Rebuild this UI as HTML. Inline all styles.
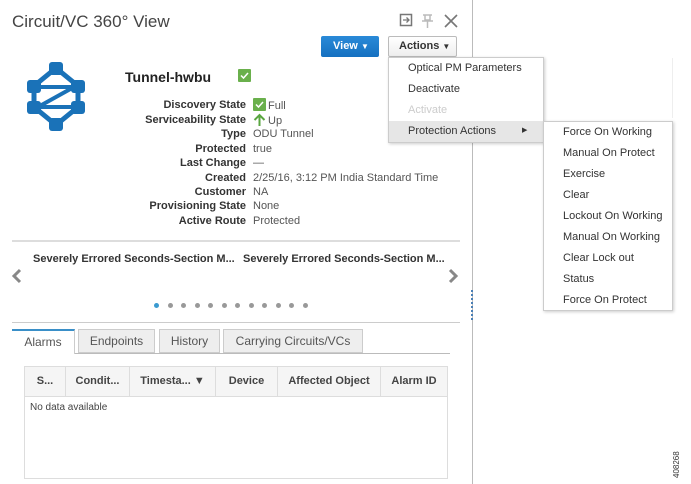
<!DOCTYPE html>
<html><head><meta charset="utf-8"><style>
*{margin:0;padding:0;box-sizing:border-box}
body{width:691px;height:484px;background:#fff;font-family:"Liberation Sans",Arial,sans-serif;position:relative;overflow:hidden;color:#333}
.a{position:absolute}
.lbl{position:absolute;right:445px;font-size:11px;font-weight:bold;color:#333;white-space:nowrap}
.val{position:absolute;left:253px;font-size:11px;color:#555;white-space:nowrap}
.mi{position:absolute;font-size:11px;color:#333;white-space:nowrap}
.th{position:absolute;top:366px;height:31px;line-height:31px;font-size:11px;font-weight:bold;color:#444;text-align:center;border-right:1px solid #ddd}
.dot{position:absolute;top:303px;width:5px;height:5px;border-radius:50%;background:#999}
</style></head><body>
<div class="a" style="left:472px;top:0;width:1px;height:484px;background:#bbb"></div>
<div class="a" style="left:471px;top:290px;width:2px;height:30px;border-left:2px dotted #4a7fb5"></div>
<div class="a" style="left:672px;top:58px;width:1px;height:60px;background:#eee"></div>
<div class="a" style="left:12px;top:12px;font-size:17px;color:#444">Circuit/VC 360° View</div>
<svg class="a" style="left:398px;top:12px" width="62" height="18" viewBox="0 0 62 18">
<rect x="2.5" y="2.5" width="11" height="11" fill="none" stroke="#777" stroke-width="1.5"/><path d="M5 8h6M8.5 5.5l2.5 2.5-2.5 2.5" stroke="#777" stroke-width="1.3" fill="none"/>
<path d="M25 3h9M27 3v5h5V3M24 9h11M29.5 9v7" stroke="#bbb" stroke-width="1.5" fill="none"/>
<path d="M47 3l12 12M59 3L47 15" stroke="#777" stroke-width="1.6"/></svg>
<div class="a" style="left:321px;top:36px;width:58px;height:21px;background:linear-gradient(#2a8ad8,#1570c0);border-radius:2px;color:#fff;font-size:11px;font-weight:bold;line-height:21px;padding-left:12px">View <span style="font-size:8px">▼</span></div>
<div class="a" style="left:388px;top:36px;width:69px;height:21px;background:linear-gradient(#fff,#eee);border:1px solid #bbb;border-radius:2px;font-size:11px;font-weight:bold;line-height:19px;padding-left:10px;color:#333">Actions <span style="font-size:8px">▼</span></div>
<div class="a" style="left:388px;top:57px;width:156px;height:86px;background:#fff;border:1px solid #ccc;box-shadow:1px 1px 3px rgba(0,0,0,.2)"></div>
<div class="a" style="left:389px;top:121px;width:154px;height:21px;background:#e6e6e6"></div>
<div class="mi" style="left:408px;top:62px">Optical PM Parameters</div>
<div class="mi" style="left:408px;top:83px">Deactivate</div>
<div class="mi" style="left:408px;top:104px;color:#ccc">Activate</div>
<div class="mi" style="left:408px;top:125px">Protection Actions</div>
<div class="mi" style="left:522px;top:126px;font-size:7px">▶</div>
<div class="a" style="left:543px;top:121px;width:130px;height:190px;background:#fff;border:1px solid #ccc;box-shadow:1px 1px 3px rgba(0,0,0,.2)"></div>
<div class="mi" style="left:563px;top:126px">Force On Working</div>
<div class="mi" style="left:563px;top:147px">Manual On Protect</div>
<div class="mi" style="left:563px;top:168px">Exercise</div>
<div class="mi" style="left:563px;top:189px">Clear</div>
<div class="mi" style="left:563px;top:210px">Lockout On Working</div>
<div class="mi" style="left:563px;top:231px">Manual On Working</div>
<div class="mi" style="left:563px;top:252px">Clear Lock out</div>
<div class="mi" style="left:563px;top:273px">Status</div>
<div class="mi" style="left:563px;top:294px">Force On Protect</div>
<svg class="a" style="left:24px;top:60px" width="64" height="72" viewBox="0 0 64 72">
<path d="M32 8L10 26v21l22 18 22-18V26z" fill="none" stroke="#1a72b8" stroke-width="5" stroke-linejoin="round"/>
<path d="M14 27h36L14 47h36" fill="none" stroke="#1a72b8" stroke-width="4"/>
<rect x="25" y="2" width="14" height="13" rx="3" fill="#1a72b8"/>
<rect x="3" y="20" width="14" height="13" rx="3" fill="#1a72b8"/>
<rect x="47" y="20" width="14" height="13" rx="3" fill="#1a72b8"/>
<rect x="3" y="41" width="14" height="13" rx="3" fill="#1a72b8"/>
<rect x="47" y="41" width="14" height="13" rx="3" fill="#1a72b8"/>
<rect x="25" y="58" width="14" height="13" rx="3" fill="#1a72b8"/>
</svg>
<div class="a" style="left:125px;top:69px;font-size:14px;font-weight:bold;color:#222">Tunnel-hwbu</div>
<svg class="a" style="left:238px;top:69px" width="13" height="13"><rect width="13" height="13" rx="1" fill="#6ab04c"/><path d="M3 6.5l2.5 2.5 4.5-5" stroke="#fff" stroke-width="1.5" fill="none"/></svg>
<div class="lbl" style="top:99px">Discovery State</div>
<div class="lbl" style="top:114px">Serviceability State</div>
<div class="lbl" style="top:128px">Type</div>
<div class="lbl" style="top:143px">Protected</div>
<div class="lbl" style="top:157px">Last Change</div>
<div class="lbl" style="top:172px">Created</div>
<div class="lbl" style="top:186px">Customer</div>
<div class="lbl" style="top:200px">Provisioning State</div>
<div class="lbl" style="top:215px">Active Route</div>
<svg class="a" style="left:253px;top:98px" width="13" height="13"><rect width="13" height="13" rx="1" fill="#6ab04c"/><path d="M3 6.5l2.5 2.5 4.5-5" stroke="#fff" stroke-width="1.5" fill="none"/></svg>
<div class="val" style="top:100px;left:268px">Full</div>
<svg class="a" style="left:253px;top:113px" width="13" height="13"><path d="M6.5 13V2M1.5 7l5-5 5 5" stroke="#5aa640" stroke-width="2" fill="none"/></svg>
<div class="val" style="top:115px;left:268px">Up</div>
<div class="val" style="top:128px">ODU Tunnel</div>
<div class="val" style="top:143px">true</div>
<div class="val" style="top:157px">—</div>
<div class="val" style="top:172px">2/25/16, 3:12 PM India Standard Time</div>
<div class="val" style="top:186px">NA</div>
<div class="val" style="top:200px">None</div>
<div class="val" style="top:215px">Protected</div>
<div class="a" style="left:12px;top:240px;width:448px;height:2px;background:#ddd"></div>
<div class="a" style="left:33px;top:253px;font-size:11px;font-weight:bold;color:#333;white-space:nowrap">Severely Errored Seconds-Section M...</div>
<div class="a" style="left:243px;top:253px;font-size:11px;font-weight:bold;color:#333;white-space:nowrap">Severely Errored Seconds-Section M...</div>
<svg class="a" style="left:11px;top:268px" width="12" height="16"><path d="M9 2L3 8l6 6" stroke="#888" stroke-width="3" fill="none"/></svg>
<svg class="a" style="left:447px;top:268px" width="12" height="16"><path d="M3 2l6 6-6 6" stroke="#888" stroke-width="3" fill="none"/></svg>
<div class="dot" style="left:154px;background:#3a9ad0"></div><div class="dot" style="left:168px"></div><div class="dot" style="left:181px"></div><div class="dot" style="left:195px"></div><div class="dot" style="left:208px"></div><div class="dot" style="left:222px"></div><div class="dot" style="left:235px"></div><div class="dot" style="left:249px"></div><div class="dot" style="left:262px"></div><div class="dot" style="left:276px"></div><div class="dot" style="left:289px"></div><div class="dot" style="left:303px"></div>
<div class="a" style="left:12px;top:322px;width:448px;height:1px;background:#ccc"></div>
<div class="a" style="left:12px;top:353px;width:438px;height:1px;background:#bbb"></div>
<div class="a" style="left:12px;top:329px;width:63px;height:25px;background:#fff;border-top:2px solid #3a8fc8;border-right:1px solid #ccc;font-size:12px;color:#555;text-align:center;line-height:23px">Alarms</div>
<div class="a" style="left:78px;top:329px;width:77px;height:24px;background:#eee;border:1px solid #ccc;font-size:12px;color:#555;text-align:center;line-height:22px">Endpoints</div>
<div class="a" style="left:159px;top:329px;width:61px;height:24px;background:#eee;border:1px solid #ccc;font-size:12px;color:#555;text-align:center;line-height:22px">History</div>
<div class="a" style="left:223px;top:329px;width:140px;height:24px;background:#eee;border:1px solid #ccc;font-size:12px;color:#555;text-align:center;line-height:22px">Carrying Circuits/VCs</div>
<div class="a" style="left:24px;top:366px;width:424px;height:113px;border:1px solid #ddd"></div>
<div class="a" style="left:25px;top:367px;width:422px;height:30px;background:#f5f5f5;border-bottom:1px solid #ddd"></div>
<div class="th" style="left:25px;width:41px">S...</div>
<div class="th" style="left:66px;width:64px">Condit...</div>
<div class="th" style="left:130px;width:86px">Timesta... ▼</div>
<div class="th" style="left:216px;width:62px">Device</div>
<div class="th" style="left:278px;width:103px">Affected Object</div>
<div class="th" style="left:381px;width:66px;border-right:none">Alarm ID</div>
<div class="a" style="left:30px;top:402px;font-size:10px;color:#444">No data available</div>
<div class="a" style="left:672px;top:448px;font-size:8px;color:#333;transform:rotate(-90deg);transform-origin:left top;top:478px">408268</div>
</body></html>
